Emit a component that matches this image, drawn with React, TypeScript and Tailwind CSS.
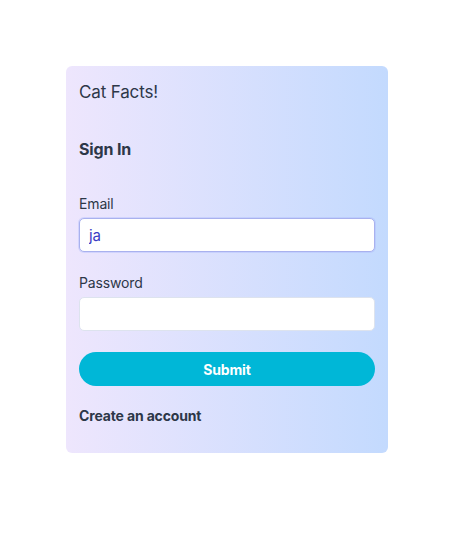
export default function App() {
  return (
    <div className="min-h-[536px] bg-white font-['Inter',sans-serif] tracking-[-0.15px] text-[#2d3748]">
      <div className="h-[66px]" />
      <div className="ml-[66px] flex w-[322px] flex-col rounded-md bg-gradient-to-r from-[#eee6fd] to-[#c3dafe] px-[13px] pb-[27px] pt-[12px]">
        <h1 className="text-[17px] leading-[28px]">Cat Facts!</h1>

        <h2 className="mt-[31px] text-[16px] font-bold leading-[24px]">Sign In</h2>

        <form className="mt-[33px] flex flex-col" onSubmit={(e) => e.preventDefault()}>
          <label htmlFor="email" className="text-[14px] leading-[20px]">
            Email
          </label>
          <input
            id="email"
            type="email"
            defaultValue="ja"
            autoFocus
            className="mt-[4px] h-[34px] w-full rounded-[5px] border border-[#a9b1ee] bg-white px-[9px] text-[15px] text-[#3b3bc4] caret-[#3b3bc4] shadow-[0_0_0_1px_rgba(165,180,252,0.35)] outline-none"
          />

          <label htmlFor="password" className="mt-[21px] text-[14px] leading-[20px]">
            Password
          </label>
          <input
            id="password"
            type="password"
            className="mt-[4px] h-[34px] w-full rounded-[5px] border border-[#dde3ee] bg-white px-[9px] text-[14px] outline-none"
          />

          <button
            type="submit"
            className="mt-[21px] h-[34px] w-full rounded-full bg-[#00b7d7] text-[14px] font-bold text-white"
          >
            Submit
          </button>
        </form>

        <a href="#" className="mt-[20px] text-[14px] font-bold leading-[20px]">
          Create an account
        </a>
      </div>
    </div>
  )
}
